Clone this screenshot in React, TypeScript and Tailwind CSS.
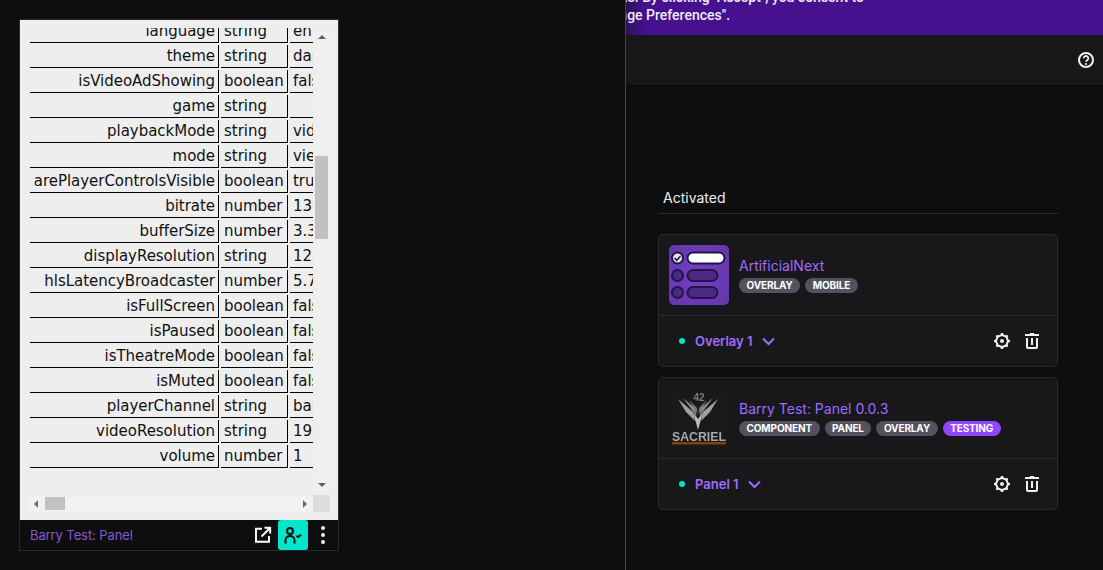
const rows: [string, string, string][] = [
  ["language", "string", "en"],
  ["theme", "string", "dark"],
  ["isVideoAdShowing", "boolean", "false"],
  ["game", "string", ""],
  ["playbackMode", "string", "video"],
  ["mode", "string", "viewer"],
  ["arePlayerControlsVisible", "boolean", "true"],
  ["bitrate", "number", "1364"],
  ["bufferSize", "number", "3.32"],
  ["displayResolution", "string", "1280"],
  ["hlsLatencyBroadcaster", "number", "5.72"],
  ["isFullScreen", "boolean", "false"],
  ["isPaused", "boolean", "false"],
  ["isTheatreMode", "boolean", "false"],
  ["isMuted", "boolean", "false"],
  ["playerChannel", "string", "barry"],
  ["videoResolution", "string", "1920"],
  ["volume", "number", "1"],
];

function Tri({ dir }: { dir: "up" | "down" | "left" | "right" }) {
  const pts = { up: "4,0 8,4 0,4", down: "0,0 8,0 4,4", left: "4,0 4,8 0,4", right: "0,0 4,4 0,8" }[dir];
  const w = dir === "up" || dir === "down" ? 8 : 4;
  const h = dir === "up" || dir === "down" ? 4 : 8;
  return (
    <svg width={w} height={h} viewBox={`0 0 ${w} ${h}`} className="block shrink-0">
      <polygon points={pts} fill={dir === "up" || dir === "down" ? "#5f5f5f" : "#6a6a6a"} />
    </svg>
  );
}

function Gear() {
  return (
    <svg width="20" height="20" viewBox="0 0 20 20" className="block">
      <path fill="#efeff1" fillRule="evenodd" d="M10 8a2 2 0 1 0 0 4 2 2 0 0 0 0-4z" />
      <path
        fill="#efeff1"
        fillRule="evenodd"
        d="M9 2h2a2.010 2.010 0 0 0 1.235 1.855l.53.22a2.010 2.010 0 0 0 2.185-.439l1.414 1.414a2.010 2.010 0 0 0-.439 2.185l.22.53A2.010 2.010 0 0 0 18 9v2a2.010 2.010 0 0 0-1.855 1.235l-.22.53a2.010 2.010 0 0 0 .44 2.185l-1.415 1.414a2.010 2.010 0 0 0-2.184-.439l-.531.22A2.010 2.010 0 0 0 11 18H9a2.010 2.010 0 0 0-1.235-1.854l-.53-.22a2.009 2.009 0 0 0-2.185.438L3.636 14.950a2.009 2.009 0 0 0 .438-2.184l-.22-.531A2.010 2.010 0 0 0 2 11V9c.809 0 1.545-.487 1.854-1.235l.22-.53a2.009 2.009 0 0 0-.438-2.185L5.050 3.636a2.010 2.010 0 0 0 2.185.438l.53-.22A2.010 2.010 0 0 0 9 2zm-4 8 1.464 3.536L10 15l3.535-1.464L15 10l-1.465-3.536L10 5 6.464 6.464 5 10z"
      />
    </svg>
  );
}

function Trash() {
  return (
    <svg width="20" height="20" viewBox="0 0 20 20" className="block">
      <path fill="#efeff1" d="M12 2H8v1H3v2h14V3h-5V2z" />
      <path fill="#efeff1" d="M4 7v9a2 2 0 0 0 2 2h8a2 2 0 0 0 2-2V7h-2v9H6V7H4z" />
      <path fill="#efeff1" d="M11 7H9v7h2V7z" />
    </svg>
  );
}

function Chevron() {
  return (
    <svg width="13" height="9" viewBox="0 0 13 9" fill="none" className="block">
      <path d="M1 1.500 6.500 7 12 1.500" stroke="#a06cff" strokeWidth="2" />
    </svg>
  );
}

function Badge({ label, accent }: { label: string; accent?: boolean }) {
  return (
    <span
      className={`flex h-[15px] items-center rounded-full px-[7.5px] text-[10px] font-bold leading-none tracking-[-0.12px] text-white ${
        accent ? "bg-[#9147ff]" : "bg-[#53535f]"
      }`}
    >
      {label}
    </span>
  );
}

function ListIcon() {
  return (
    <svg width="60" height="60" viewBox="0 0 60 60" className="block">
      <defs>
        <radialGradient id="listbg" cx="50%" cy="50%" r="70%">
          <stop offset="0%" stopColor="#7441c4" />
          <stop offset="100%" stopColor="#6336a8" />
        </radialGradient>
      </defs>
      <rect width="60" height="60" rx="5" fill="url(#listbg)" />
      <circle cx="8.500" cy="13" r="5.500" fill="#e6e3ec" stroke="#24144a" strokeWidth="2" />
      <path d="M5.500 13l2.200 2.300 3.800-4" stroke="#24144a" strokeWidth="1.600" fill="none" />
      <rect x="18.500" y="7.500" width="37" height="11" rx="5.500" fill="#fff" stroke="#24144a" strokeWidth="2" />
      <circle cx="8.500" cy="30.500" r="5.500" fill="#4a2a85" stroke="#24144a" strokeWidth="2" />
      <rect x="18.500" y="25" width="30" height="11" rx="5.500" fill="#4a2a85" stroke="#24144a" strokeWidth="2" />
      <circle cx="8.500" cy="47.500" r="5.500" fill="#4a2a85" stroke="#24144a" strokeWidth="2" />
      <rect x="18.500" y="42" width="30" height="11" rx="5.500" fill="#4a2a85" stroke="#24144a" strokeWidth="2" />
    </svg>
  );
}

function SacrielLogo() {
  return (
    <svg width="60" height="60" viewBox="0 0 60 60" className="block blur-[0.5px]">
      <rect width="60" height="60" rx="2" fill="#191919" />
      <text x="30" y="12.500" textAnchor="middle" fontSize="10" fontWeight="700" fontFamily="Liberation Sans, sans-serif" fill="#7d7d7d">42</text>
      <path d="M9 11 24 24 26 33 17 24z" fill="#a0a0a0" />
      <path d="M14 10 26 20 27.500 28z" fill="#8a8a8a" />
      <path d="M20 12 28 20 28.500 26z" fill="#767676" />
      <path d="M49 11 34 24 32 33 41 24z" fill="#a0a0a0" />
      <path d="M44 10 32 20 30.500 28z" fill="#8a8a8a" />
      <path d="M38 12 30 20 29.500 26z" fill="#767676" />
      <path d="M24 24 29 42 34 24 29 31z" fill="#bdbdbd" />
      <text x="30" y="53" textAnchor="middle" fontSize="12.500" fontWeight="700" textLength="54" lengthAdjust="spacingAndGlyphs" fontFamily="Liberation Sans, sans-serif" fill="#a9a9a9">SACRIEL</text>
      <rect x="3" y="54" width="54" height="2.500" fill="#8a3d15" />
    </svg>
  );
}

function Card({
  name,
  icon,
  badges,
  slot,
}: {
  name: string;
  icon: React.ReactNode;
  badges: { label: string; accent?: boolean }[];
  slot: string;
}) {
  return (
    <div className="w-[400px] rounded-[5px] border border-[#2b2b2e] bg-[#18181b]">
      <div className="flex h-[81px] items-center gap-[10px] border-b border-[#2b2b2e] pb-[1px] pl-[10px]">
        {icon}
        <div className="flex flex-col">
          <span className="text-[14px] leading-[18px] text-[#9e6bff]">{name}</span>
          <div className="mt-[3px] flex gap-[5px]">
            {badges.map((b) => (
              <Badge key={b.label} {...b} />
            ))}
          </div>
        </div>
      </div>
      <div className="flex h-[50px] items-center pl-[20px] pr-[15px]">
        <span className="h-[6px] w-[6px] rounded-full bg-[#00e6cb]" />
        <span className="ml-[10px] text-[13px] font-semibold leading-[20px] text-[#a06cff]">{slot}</span>
        <span className="ml-[9px]">
          <Chevron />
        </span>
        <span className="ml-auto flex gap-[10px]">
          <Gear />
          <Trash />
        </span>
      </div>
    </div>
  );
}

export default function App() {
  return (
    <div
      className="flex h-[570px] w-[1103px] overflow-hidden bg-[#0e0e10] text-[#efeff1]"
      style={{ fontFamily: "Inter, sans-serif" }}
    >
      <div className="w-[625px] shrink-0 pl-[19px] pt-[19px]">
        <div className="flex h-[532px] w-[320px] flex-col border border-[#2b2b2e]">
          <div className="flex h-[500px] flex-col bg-[#eeeeee] pl-[8px] pr-[8px] pt-[8px]">
            <div className="flex h-[467px]">
              <div className="w-[285px] overflow-hidden" style={{ fontFamily: "'DejaVu Sans', sans-serif" }}>
                <div className="-mt-[10px] w-[285px] pl-[2px] text-[15px] leading-[22px] tracking-[-0.03px] text-[#111]">
                  {rows.map(([k, t, v]) => (
                    <div key={k} className="mt-[2px] flex h-[23px] gap-[2px]">
                      <div className="w-[189px] shrink-0 border-r border-b border-black pr-[3px] text-right">{k}</div>
                      <div className="w-[67px] shrink-0 border-r border-b border-black pl-[3px]">{t}</div>
                      <div className="min-w-0 flex-1 overflow-hidden whitespace-nowrap border-b border-black pl-[3px]">{v}</div>
                    </div>
                  ))}
                </div>
              </div>
              <div className="flex w-[17px] flex-col items-center bg-[#efefef]">
                <div className="mt-[7px]">
                  <Tri dir="up" />
                </div>
                <div className="mt-[117px] h-[83px] w-[13px] bg-[#c1c1c1]" />
                <div className="mt-auto mb-[8px]">
                  <Tri dir="down" />
                </div>
              </div>
            </div>
            <div className="flex h-[17px]">
              <div className="flex w-[285px] items-center bg-[#f1f1f1] pl-[6px] pr-[6px]">
                <Tri dir="left" />
                <div className="ml-[7px] h-[13px] w-[20px] bg-[#c1c1c1]" />
                <div className="ml-auto">
                  <Tri dir="right" />
                </div>
              </div>
              <div className="w-[17px] bg-[#dcdcdc]" />
            </div>
          </div>
          <div className="flex h-[30px] items-center bg-[#0e0e10] pl-[10px]">
            <span className="text-[13px] leading-[20px] tracking-[-0.1px] text-[#8458c8]">Barry Test: Panel</span>
            <svg width="18" height="18" viewBox="0 0 18 18" fill="none" className="ml-auto block">
              <path d="M8 2.800H2v13h13V10" stroke="#fff" strokeWidth="1.900" />
              <path d="M7.500 10.500 15.500 2.500M10.500 1.800h5.700v5.700" stroke="#fff" strokeWidth="1.900" />
            </svg>
            <div className="ml-[6px] flex h-[30px] w-[30px] items-center justify-center rounded-[3px] bg-[#00e6cb]">
              <svg width="20" height="20" viewBox="0 0 20 20" fill="none" className="block">
                <circle cx="7" cy="6" r="3" stroke="#0e0e10" strokeWidth="2" />
                <path d="M2.500 18.500v-3.500a4.500 4 0 0 1 9 0v3.500" stroke="#0e0e10" strokeWidth="2" />
                <path d="M13.500 10.800l1.600 1.200 3-2.200" stroke="#0e0e10" strokeWidth="2" />
              </svg>
            </div>
            <div className="flex w-[30px] flex-col items-center gap-[3px]">
              <span className="h-[4px] w-[4px] rounded-full bg-[#efeff1]" />
              <span className="h-[4px] w-[4px] rounded-full bg-[#efeff1]" />
              <span className="h-[4px] w-[4px] rounded-full bg-[#efeff1]" />
            </div>
          </div>
        </div>
      </div>

      <div className="w-px shrink-0 bg-[#3c4a3c]" />

      <div className="flex min-w-0 flex-1 flex-col">
        <div
          className="flex h-[35px] flex-col overflow-hidden bg-[linear-gradient(90deg,#2a1258_0px,#46108f_20px)] text-[14px] font-medium leading-[18px] text-[#f0ecf6]"
          style={{ fontFamily: "Roboto, sans-serif" }}
        >
          <div className="-mt-[12px] flex w-[238px] justify-end whitespace-nowrap">
            <span>cookies on our site. By clicking "Accept", you consent to</span>
          </div>
          <div className="-ml-[34px] whitespace-nowrap">Manage Preferences".</div>
        </div>
        <div className="flex h-[51px] items-center justify-end border-b border-[#0a0a0b] bg-[#18181b] pr-[7px]">
          <svg width="20" height="20" viewBox="0 0 20 20" fill="none" className="block">
            <circle cx="10" cy="10" r="7" stroke="#efeff1" strokeWidth="2" />
            <path d="M7.700 8.300a2.300 2.300 0 1 1 3.500 2c-.8.500-1.200.9-1.200 1.400" stroke="#efeff1" strokeWidth="1.800" />
            <circle cx="10" cy="14" r="1.100" fill="#efeff1" />
          </svg>
        </div>
        <div className="pl-[32px] pt-[102px]">
          <div className="w-[400px] border-b border-[#2b2b2e] pb-[5px] pl-[5px] text-[14px] leading-[20px]">Activated</div>
          <div className="mt-[20px] flex flex-col gap-[10px]">
            <Card
              name="ArtificialNext"
              icon={<ListIcon />}
              badges={[{ label: "OVERLAY" }, { label: "MOBILE" }]}
              slot="Overlay 1"
            />
            <Card
              name="Barry Test: Panel 0.0.3"
              icon={<SacrielLogo />}
              badges={[{ label: "COMPONENT" }, { label: "PANEL" }, { label: "OVERLAY" }, { label: "TESTING", accent: true }]}
              slot="Panel 1"
            />
          </div>
        </div>
      </div>
    </div>
  );
}
